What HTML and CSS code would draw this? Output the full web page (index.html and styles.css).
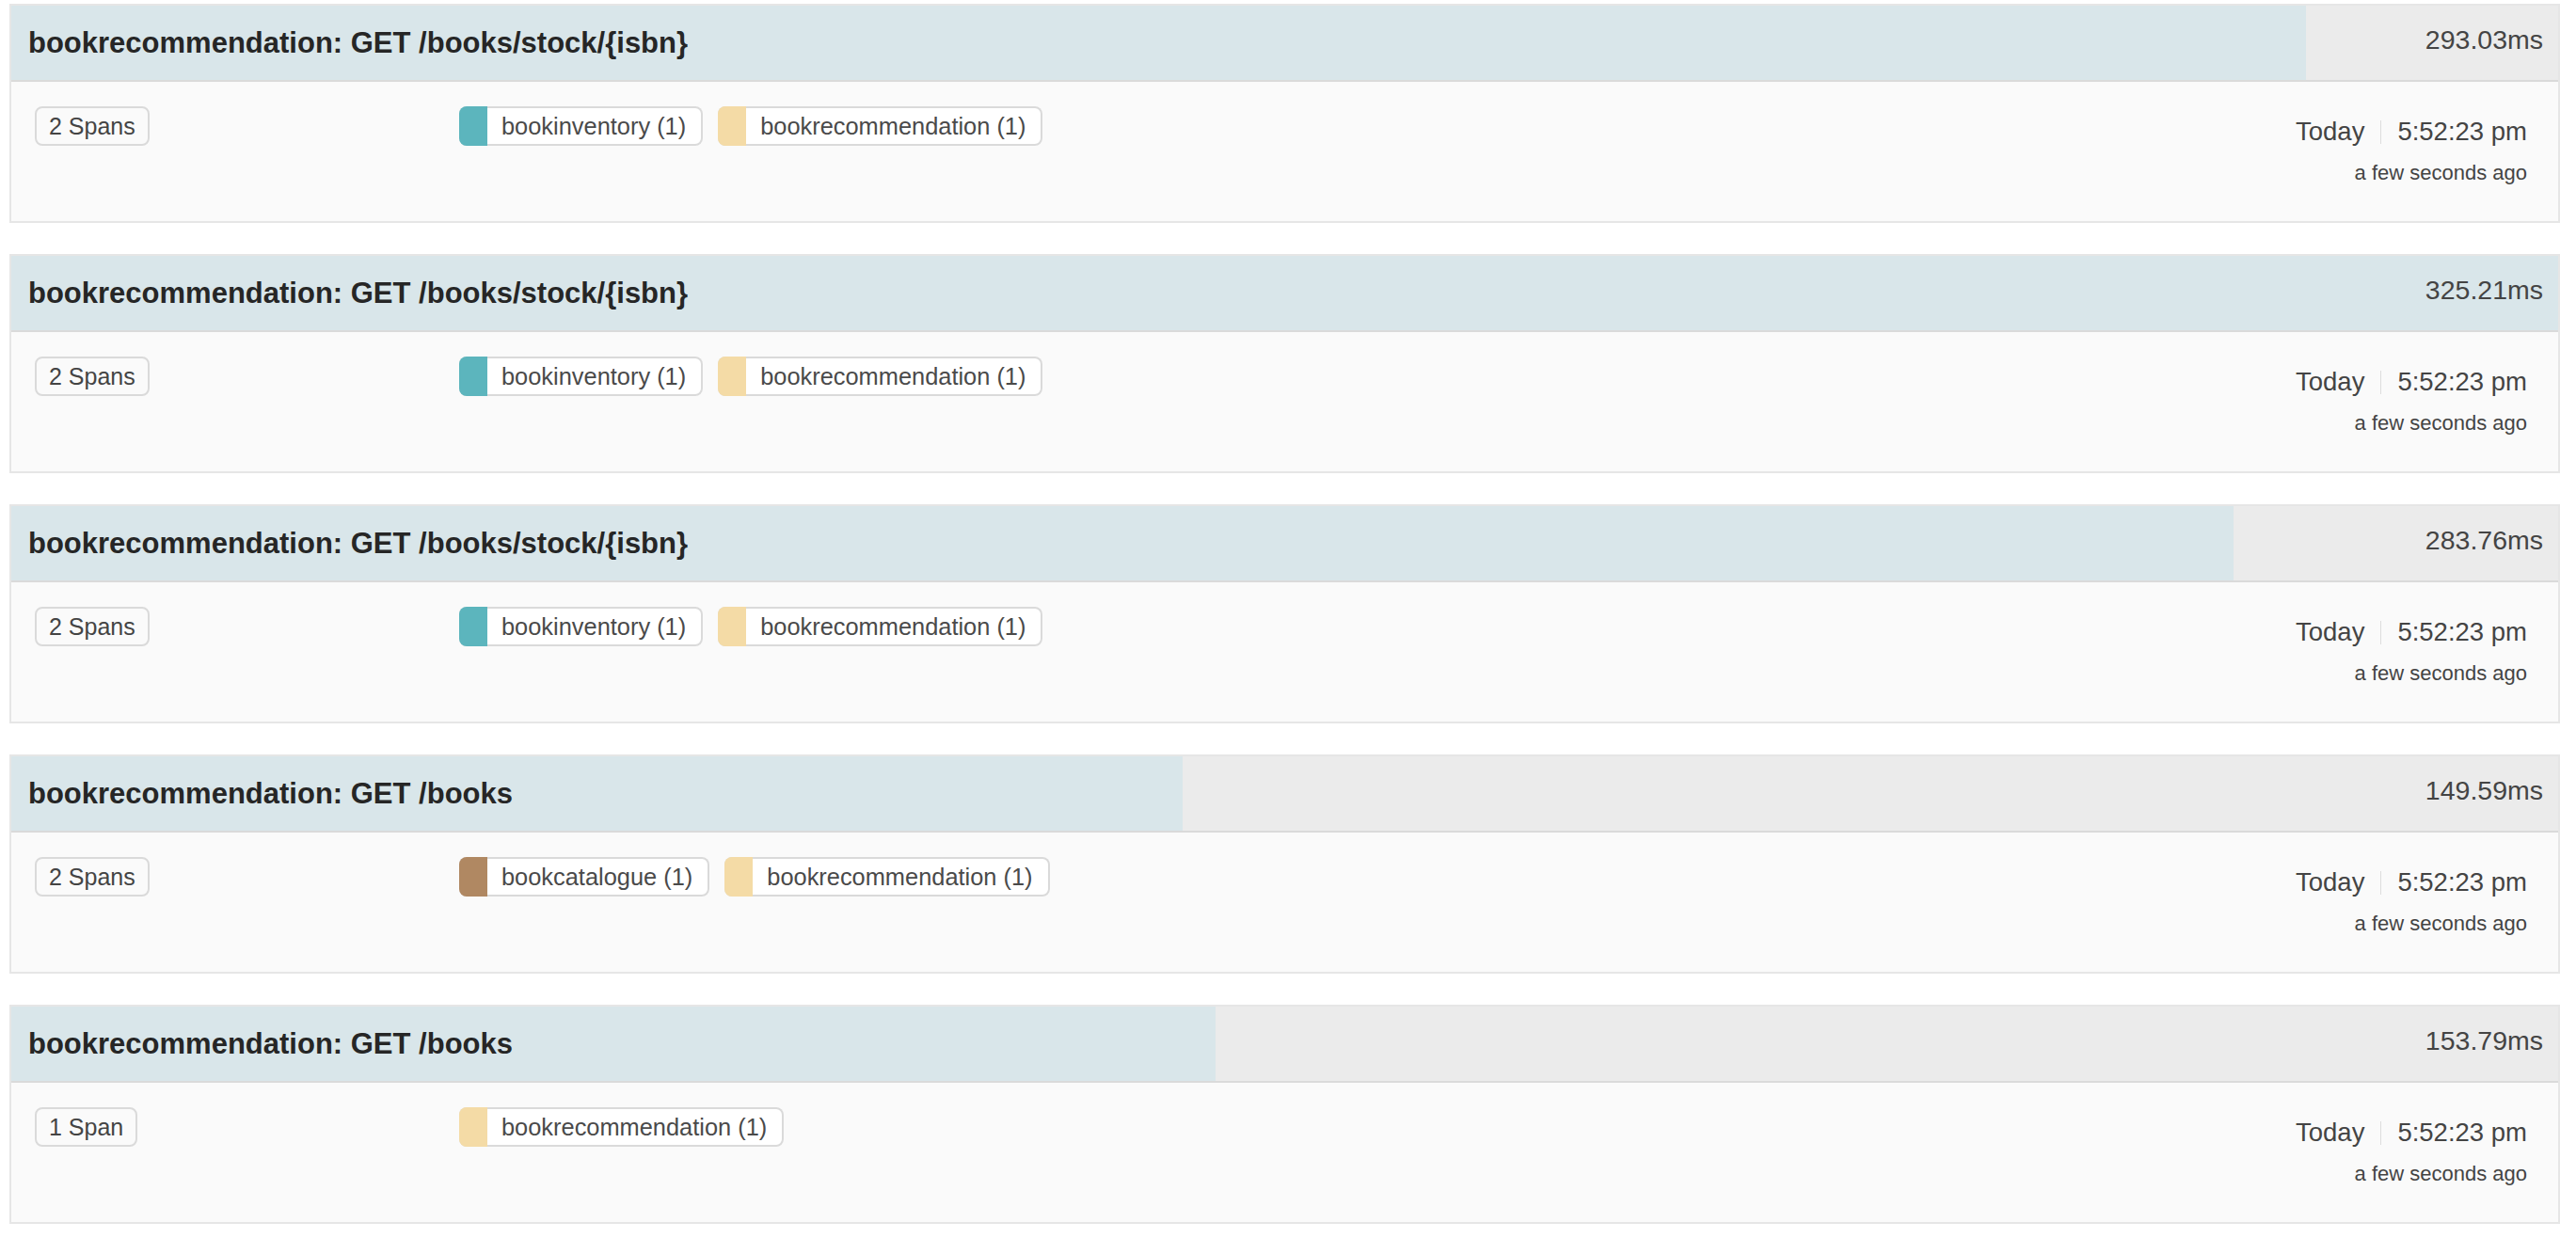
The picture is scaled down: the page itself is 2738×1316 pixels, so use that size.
FILE: index.html
```html
<!DOCTYPE html>
<html lang="en">
<head>
<meta charset="utf-8">
<title>Traces</title>
<link rel="stylesheet" href="styles.css">
</head>
<body>
<div class="traces">

  <div class="trace">
    <div class="head">
      <div class="bar" style="width:90.105%"></div>
      <div class="head-row">
        <span class="title">bookrecommendation: GET /books/stock/{isbn}</span>
        <span class="duration">293.03ms</span>
      </div>
    </div>
    <div class="body">
      <div class="spans"><span class="badge">2 Spans</span></div>
      <div class="services">
        <span class="chip"><span class="swatch teal"></span><span class="chip-label">bookinventory (1)</span></span>
        <span class="chip"><span class="swatch tan"></span><span class="chip-label">bookrecommendation (1)</span></span>
      </div>
      <div class="when">
        <div class="when-line"><span>Today</span><span class="sep"></span><span>5:52:23 pm</span></div>
        <div class="ago">a few seconds ago</div>
      </div>
    </div>
  </div>

  <div class="trace">
    <div class="head">
      <div class="bar" style="width:100%"></div>
      <div class="head-row">
        <span class="title">bookrecommendation: GET /books/stock/{isbn}</span>
        <span class="duration">325.21ms</span>
      </div>
    </div>
    <div class="body">
      <div class="spans"><span class="badge">2 Spans</span></div>
      <div class="services">
        <span class="chip"><span class="swatch teal"></span><span class="chip-label">bookinventory (1)</span></span>
        <span class="chip"><span class="swatch tan"></span><span class="chip-label">bookrecommendation (1)</span></span>
      </div>
      <div class="when">
        <div class="when-line"><span>Today</span><span class="sep"></span><span>5:52:23 pm</span></div>
        <div class="ago">a few seconds ago</div>
      </div>
    </div>
  </div>

  <div class="trace">
    <div class="head">
      <div class="bar" style="width:87.254%"></div>
      <div class="head-row">
        <span class="title">bookrecommendation: GET /books/stock/{isbn}</span>
        <span class="duration">283.76ms</span>
      </div>
    </div>
    <div class="body">
      <div class="spans"><span class="badge">2 Spans</span></div>
      <div class="services">
        <span class="chip"><span class="swatch teal"></span><span class="chip-label">bookinventory (1)</span></span>
        <span class="chip"><span class="swatch tan"></span><span class="chip-label">bookrecommendation (1)</span></span>
      </div>
      <div class="when">
        <div class="when-line"><span>Today</span><span class="sep"></span><span>5:52:23 pm</span></div>
        <div class="ago">a few seconds ago</div>
      </div>
    </div>
  </div>

  <div class="trace">
    <div class="head">
      <div class="bar" style="width:45.998%"></div>
      <div class="head-row">
        <span class="title">bookrecommendation: GET /books</span>
        <span class="duration">149.59ms</span>
      </div>
    </div>
    <div class="body">
      <div class="spans"><span class="badge">2 Spans</span></div>
      <div class="services">
        <span class="chip"><span class="swatch brown"></span><span class="chip-label">bookcatalogue (1)</span></span>
        <span class="chip"><span class="swatch tan"></span><span class="chip-label">bookrecommendation (1)</span></span>
      </div>
      <div class="when">
        <div class="when-line"><span>Today</span><span class="sep"></span><span>5:52:23 pm</span></div>
        <div class="ago">a few seconds ago</div>
      </div>
    </div>
  </div>

  <div class="trace">
    <div class="head">
      <div class="bar" style="width:47.29%"></div>
      <div class="head-row">
        <span class="title">bookrecommendation: GET /books</span>
        <span class="duration">153.79ms</span>
      </div>
    </div>
    <div class="body">
      <div class="spans"><span class="badge">1 Span</span></div>
      <div class="services">
        <span class="chip"><span class="swatch tan"></span><span class="chip-label">bookrecommendation (1)</span></span>
      </div>
      <div class="when">
        <div class="when-line"><span>Today</span><span class="sep"></span><span>5:52:23 pm</span></div>
        <div class="ago">a few seconds ago</div>
      </div>
    </div>
  </div>

</div>
</body>
</html>
```
FILE: styles.css
```css
html, body {
  margin: 0;
  padding: 0;
  background: #ffffff;
}

body {
  font-family: "Liberation Sans", Arial, Helvetica, sans-serif;
  color: #444444;
}

.traces {
  padding: 4px 17px 0 10px;
}

.trace {
  border: 2px solid #e6e6e6;
  margin-bottom: 33px;
}

.head {
  display: grid;
  height: 79px;
  background: #ebebeb;
  border-bottom: 2px solid #dadada;
}

.head > * {
  grid-area: 1 / 1;
}

.bar {
  height: 100%;
  background: #d9e6ea;
}

.head-row {
  display: flex;
  align-items: center;
  justify-content: space-between;
  padding: 0 16px 0 18px;
}

.title {
  font-size: 31px;
  font-weight: 700;
  color: #262626;
  white-space: nowrap;
}

.duration {
  margin-bottom: 6px;
  font-size: 28.5px;
  color: #444444;
  white-space: nowrap;
}

.body {
  display: flex;
  align-items: flex-start;
  height: 148px;
  box-sizing: border-box;
  padding: 26px 33px 0 25px;
  background: #fafafa;
}

.spans {
  flex: none;
  width: 451px;
}

.badge {
  display: inline-flex;
  align-items: center;
  height: 42px;
  box-sizing: border-box;
  padding: 0 13px;
  border: 2px solid #dadada;
  border-radius: 8px;
  font-size: 25px;
  color: #444444;
}

.services {
  display: flex;
  gap: 16px;
}

.chip {
  display: inline-flex;
  align-items: stretch;
  height: 42px;
  border-radius: 8px;
  overflow: hidden;
  background: #ffffff;
  box-shadow: inset 0 0 0 2px #dadada;
}

.swatch {
  flex: none;
  width: 30px;
}

.swatch.teal { background: #5cb5bd; }
.swatch.tan { background: #f4dba6; }
.swatch.brown { background: #b08862; }

.chip-label {
  display: flex;
  align-items: center;
  padding: 0 18px 0 15px;
  font-size: 25.4px;
  color: #4a4a4a;
  white-space: nowrap;
}

.when {
  margin-left: auto;
  padding-top: 11px;
  text-align: right;
}

.when-line {
  display: flex;
  justify-content: flex-end;
  align-items: center;
  font-size: 27.5px;
  line-height: 32px;
  color: #444444;
  white-space: nowrap;
}

.sep {
  width: 1px;
  height: 25px;
  margin: 0 17px;
  background: #dddddd;
}

.ago {
  margin-top: 15px;
  font-size: 22px;
  line-height: 26px;
  color: #444444;
  white-space: nowrap;
}
```
